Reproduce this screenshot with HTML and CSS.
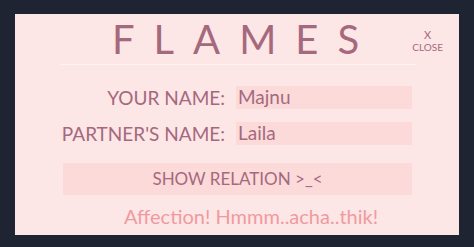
FILE: index.html
```html
<!DOCTYPE html>
<html>
<head>
<meta charset="utf-8">
<link rel="stylesheet" href="styles.css">
</head>
<body>
<div class="panel">
  <div class="header">
    <h1 class="title">FLAMES</h1>
    <div class="close"><span class="x">X</span><span class="close-label">CLOSE</span></div>
  </div>
  <div class="rule"></div>
  <div class="form">
    <label class="label">YOUR NAME:</label>
    <div class="field">Majnu</div>
    <label class="label">PARTNER'S NAME:</label>
    <div class="field">Laila</div>
  </div>
  <div class="button-row">
    <div class="button">SHOW RELATION &gt;_&lt;</div>
  </div>
  <div class="result">Affection! Hmmm..acha..thik!</div>
</div>
</body>
</html>
```
FILE: styles.css
```css
html, body {
  margin: 0;
  padding: 0;
  background: #1e2432;
}
body {
  font-family: Lato, "Open Sans", sans-serif;
  color: #a5697e;
  padding: 14px 15px 12px 15px;
}
.panel {
  position: relative;
  background: #fde6e6;
  width: 444px;
  height: 221px;
  box-sizing: border-box;
}
.header {
  height: 50px;
  display: flex;
  justify-content: center;
}
.title {
  margin: 0;
  font-weight: 400;
  font-size: 40px;
  line-height: 50px;
  letter-spacing: 19px;
  padding-left: 16px;
  color: #a5697e;
}
.close {
  position: absolute;
  top: 14px;
  right: 16px;
  display: flex;
  flex-direction: column;
  align-items: center;
  color: #a5697e;
}
.close .x { display: block; font-size: 11px; line-height: 13px; }
.close .close-label { display: block; font-size: 10px; line-height: 12px; }
.rule {
  margin: 0 43px 0 45px;
  height: 1px;
  background: #fff3f3;
}
.form {
  display: grid;
  grid-template-columns: 210px 176px;
  column-gap: 11px;
  row-gap: 13px;
  margin-top: 21px;
}
.label {
  text-align: right;
  font-size: 19px;
  line-height: 23px;
}
.field {
  background: #fcdada;
  height: 23px;
  font-size: 19px;
  line-height: 21px;
  padding-left: 2px;
  box-sizing: border-box;
}
.button-row {
  margin-top: 18px;
  padding-left: 48px;
}
.button {
  width: 349px;
  height: 32px;
  background: #fcdada;
  text-align: center;
  font-size: 17px;
  line-height: 32px;
}
.result {
  margin-top: 9px;
  padding-left: 28px;
  text-align: center;
  font-size: 20px;
  line-height: 24px;
  color: #f09a9f;
}
```
